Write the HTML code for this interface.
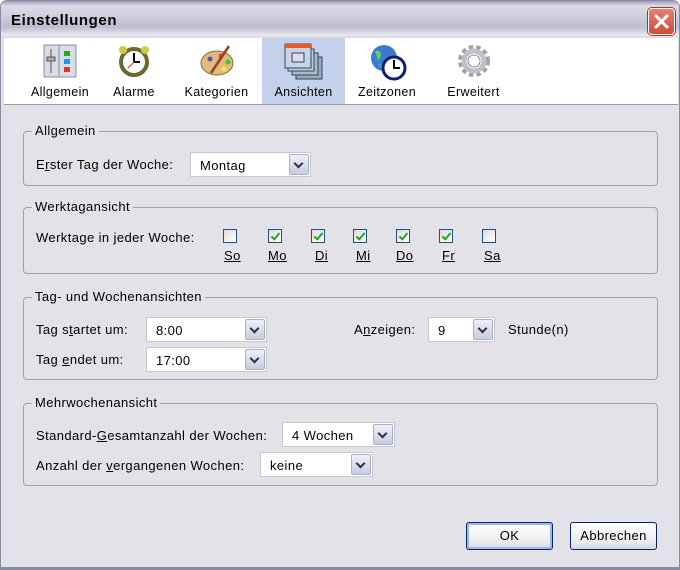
<!DOCTYPE html>
<html><head><meta charset="utf-8"><style>
*{box-sizing:border-box;margin:0;padding:0}
body{width:680px;height:570px;overflow:hidden;font-family:"Liberation Sans",sans-serif;font-size:12px;color:#000;background:#fff}
.win{position:absolute;left:0;top:0;width:680px;height:570px;background:#e2e2e8;border:1px solid #8b8ba0;border-radius:7px 7px 0 0;overflow:hidden}
.title{position:absolute;left:0;top:0;width:680px;height:37px;background:linear-gradient(#9e9eb9 0,#dcdce8 5px,#d0d0de 14px,#bdbdd0 26px,#e8e8f0 34px,#d8d8e2 37px)}
.title span{position:absolute;left:10px;top:11px;font-weight:bold;font-size:15px;letter-spacing:.6px;color:#000}
.close{position:absolute;left:647px;top:7px;width:27px;height:27px;border-radius:4px;background:linear-gradient(#e88070,#d04a3a);border:1px solid #fff;box-shadow:0 0 0 1px #b03020}
.tb{position:absolute;left:3px;top:37px;width:674px;height:67px;background:#fff;border-bottom:1px solid #9a9aaa}
.tool{position:absolute;top:0;height:66px;text-align:center}
.tool .lbl{position:absolute;left:-5px;right:-5px;top:47px;font-size:12.5px;letter-spacing:.35px}
.tool svg{position:absolute;top:5px;left:50%;margin-left:-18px}
.sel{background:#c3d2ea}
.gb{position:absolute;left:22px;border:1px solid #a0a0a8;border-radius:4px}
.gb .gt{position:absolute;left:8px;top:-9px;background:#e2e2e8;padding:0 3px;font-size:13px;letter-spacing:.4px}
.t{position:absolute;font-size:13px;letter-spacing:.4px;white-space:nowrap}
.cb{position:absolute;height:25px;background:#fff;border:1px solid #c8c8d0;font-size:13px;letter-spacing:.4px}
.cb span{position:absolute;left:9px;top:5px}
.cb i{position:absolute;right:1px;top:1px;width:20px;height:21px;background:linear-gradient(#eef0f8,#c8cce0);border:1px solid #a8b0d0;border-radius:2px}
.cb i:after{content:"";position:absolute;left:5px;top:5px;width:5px;height:5px;border-right:2px solid #303040;border-bottom:2px solid #303040;transform:rotate(45deg)}
.ck{position:absolute;width:14px;height:14px;border:1px solid #1c5180;background:linear-gradient(135deg,#dcdcd6,#fff)}
.ck.on:after{content:"";position:absolute;left:4px;top:1px;width:3px;height:7px;border-right:2px solid #21a121;border-bottom:2px solid #21a121;transform:rotate(40deg)}
.dl{position:absolute;top:247px;font-size:13px;letter-spacing:.4px;text-decoration:underline}
.btn{position:absolute;top:521px;width:87px;height:28px;border:1px solid #0a2468;border-radius:3px;background:linear-gradient(#fff,#ececf0 70%,#d6d6e0);text-align:center;line-height:26px;font-size:13px;letter-spacing:.4px}
u{text-decoration:underline}
</style></head><body>
<div class="win">
<div class="title"><span>Einstellungen</span>
<div class="close"><svg width="25" height="25" viewBox="0 0 25 25"><path d="M6 6L19 19M19 6L6 19" stroke="#fff" stroke-width="3"/></svg></div></div>
<div class="tb">
<div class="tool" style="left:25px;width:62px"><svg width="36" height="36"><rect x="2" y="2" width="32" height="32" fill="#d8dce4" stroke="#8890a0"/><line x1="17" y1="2" x2="17" y2="34" stroke="#8890a0"/><line x1="9" y1="6" x2="9" y2="30" stroke="#555"/><rect x="5" y="14" width="8" height="4" fill="#aaa" stroke="#555"/><rect x="22" y="8" width="6" height="5" fill="#2a2"/><rect x="22" y="16" width="6" height="5" fill="#29e"/><rect x="22" y="24" width="6" height="5" fill="#d33"/></svg><div class="lbl">Allgemein</div></div>
<div class="tool" style="left:104px;width:52px"><svg width="36" height="36"><circle cx="18" cy="19" r="13" fill="#fff" stroke="#6a6a30" stroke-width="4"/><circle cx="7" cy="7" r="4" fill="#cc4"/><circle cx="29" cy="7" r="4" fill="#cc4"/><path d="M18 10V19L24 19" stroke="#000" stroke-width="2" fill="none"/><path d="M18 19L12 25" stroke="#d33" stroke-width="1"/></svg><div class="lbl">Alarme</div></div>
<div class="tool" style="left:175px;width:75px"><svg width="36" height="36"><ellipse cx="18" cy="20" rx="16" ry="12" fill="#e0b880" stroke="#8a6a40"/><circle cx="11" cy="16" r="2.5" fill="#55a"/><circle cx="22" cy="13" r="2.5" fill="#d44"/><circle cx="29" cy="19" r="2.5" fill="#3c3"/><circle cx="25" cy="26" r="2.5" fill="#ee3"/><path d="M30 3L12 30" stroke="#a04020" stroke-width="2.5"/></svg><div class="lbl">Kategorien</div></div>
<div class="tool sel" style="left:258px;width:83px"><svg width="42" height="40" style="margin-left:-20px"><rect x="12" y="14" width="26" height="22" fill="#9ab" stroke="#345"/><rect x="8" y="10" width="26" height="22" fill="#abc" stroke="#345"/><rect x="4" y="6" width="26" height="22" fill="#bcd" stroke="#345"/><rect x="1" y="1" width="26" height="24" fill="#c6d4ea" stroke="#345"/><rect x="1" y="1" width="26" height="4" fill="#e85a20"/><rect x="8" y="10" width="12" height="9" fill="#dde" stroke="#345"/></svg><div class="lbl">Ansichten</div></div>
<div class="tool" style="left:352px;width:62px"><svg width="40" height="40" style="margin-left:-18px"><circle cx="15" cy="15" r="13" fill="#3a7ad0"/><path d="M6 8C12 6 14 12 10 16C8 20 14 22 12 26" fill="#6c6" /><circle cx="25" cy="25" r="11" fill="#fff" stroke="#102070" stroke-width="3"/><path d="M25 17V25H31" stroke="#000" stroke-width="2" fill="none"/></svg><div class="lbl">Zeitzonen</div></div>
<div class="tool" style="left:437px;width:65px"><svg width="36" height="36"><circle cx="18" cy="18" r="13" fill="none" stroke="#a0a0a8" stroke-width="6" stroke-dasharray="4 3"/><circle cx="18" cy="18" r="10" fill="none" stroke="#c0c0c8" stroke-width="5"/><circle cx="18" cy="18" r="6" fill="#fff" stroke="#888"/></svg><div class="lbl">Erweitert</div></div>
</div>

<div class="gb" style="top:130px;width:635px;height:55px"><div class="gt">Allgemein</div></div>
<div class="t" style="left:35px;top:156px">E<u>r</u>ster Tag der Woche:</div>
<div class="cb" style="left:189px;top:151px;width:121px"><span>Montag</span><i></i></div>

<div class="gb" style="top:206px;width:635px;height:67px"><div class="gt">Werktagansicht</div></div>
<div class="t" style="left:35px;top:229px">Werktage in jeder Woche:</div>
<div class="ck" style="left:222px;top:228px"></div>
<div class="ck on" style="left:267px;top:228px"></div>
<div class="ck on" style="left:310px;top:228px"></div>
<div class="ck on" style="left:352px;top:228px"></div>
<div class="ck on" style="left:395px;top:228px"></div>
<div class="ck on" style="left:438px;top:228px"></div>
<div class="ck" style="left:481px;top:228px"></div>
<div class="dl" style="left:223px">So</div><div class="dl" style="left:267px">Mo</div><div class="dl" style="left:314px">Di</div><div class="dl" style="left:355px">Mi</div><div class="dl" style="left:395px">Do</div><div class="dl" style="left:441px">Fr</div><div class="dl" style="left:483px">Sa</div>

<div class="gb" style="top:296px;width:635px;height:83px"><div class="gt">Tag- und Wochenansichten</div></div>
<div class="t" style="left:35px;top:321px">Tag s<u>t</u>artet um:</div>
<div class="cb" style="left:145px;top:316px;width:121px"><span>8:00</span><i></i></div>
<div class="t" style="left:35px;top:351px">Tag <u>e</u>ndet um:</div>
<div class="cb" style="left:145px;top:346px;width:121px"><span>17:00</span><i></i></div>
<div class="t" style="left:353px;top:321px">A<u>n</u>zeigen:</div>
<div class="cb" style="left:427px;top:316px;width:67px"><span>9</span><i></i></div>
<div class="t" style="left:507px;top:321px">Stunde(n)</div>

<div class="gb" style="top:402px;width:635px;height:83px"><div class="gt">Mehrwochenansicht</div></div>
<div class="t" style="left:35px;top:427px">Standard-<u>G</u>esamtanzahl der Wochen:</div>
<div class="cb" style="left:281px;top:421px;width:113px"><span>4 Wochen</span><i></i></div>
<div class="t" style="left:35px;top:457px">Anzahl der <u>v</u>ergangenen Wochen:</div>
<div class="cb" style="left:259px;top:451px;width:113px"><span>keine</span><i></i></div>

<div class="btn" style="left:465px;box-shadow:inset 0 0 0 2px #9cb8e8">OK</div>
<div class="btn" style="left:569px">Abbrechen</div>
</div>
<div style="position:absolute;left:0;top:567px;width:680px;height:3px;background:#8b8ba0"></div>
</body></html>
